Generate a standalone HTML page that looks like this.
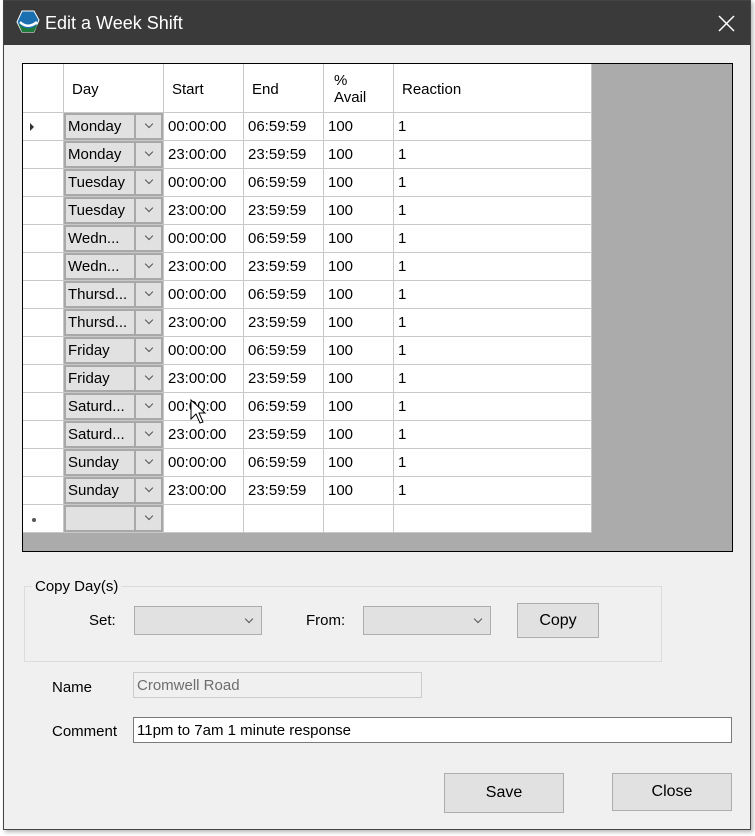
<!DOCTYPE html>
<html><head><style>
*{box-sizing:border-box;margin:0;padding:0}
body{width:755px;height:836px;background:#fff;font-family:"Liberation Sans",sans-serif;font-size:15px;color:#000;position:relative;overflow:hidden}
.win{position:absolute;left:3px;top:0;width:748px;height:830px;background:#f0f0f0;border:1px solid #444;box-shadow:2px 2px 4px rgba(0,0,0,.3)}
.title{position:absolute;left:0;top:0;width:746px;height:44px;background:#3a3a3a;color:#fff;font-size:18px}
.abs{position:absolute}
.grid{position:absolute;left:18px;top:62px;width:711px;height:489px;border:1px solid #000;background:#ababab}
.tb{position:absolute;left:0;top:0;width:569px;background:#fff}
.r{display:flex;height:28px}
.r>div{height:28px;border-right:1px solid #c8c8c8;border-bottom:1px solid #c8c8c8;line-height:27px;padding-left:4px;white-space:nowrap;position:relative;flex:none}
.r.h,.r.h>div{height:49px}
.r.h>div{line-height:52px;padding-left:8px}
.c0{width:41px;padding:0!important}.c1{width:100px;padding:0!important}.c2{width:80px}.c3{width:80px}.c4{width:70px}.c5{width:198px}
.cb{position:absolute;left:0;top:0;width:99px;height:27px;border:2px solid #a8a8a8;background:#e1e1e1;padding-left:2px;line-height:23px}
.cb:after{content:"";position:absolute;right:0;top:0;width:25px;height:23px;border-left:2px solid #a8a8a8}
.ar{position:absolute;right:9px;top:6px;width:6px;height:6px;border-right:1px solid #555;border-bottom:1px solid #555;transform:rotate(45deg)}
.btn{position:absolute;background:#e1e1e1;border:1px solid #adadad;text-align:center;font-size:16px}
.dd{position:absolute;background:#e1e1e1;border:1px solid #adadad;height:29px}
</style></head><body>
<div class="win">
<div class="title">
<svg class="abs" style="left:12px;top:9px" width="24" height="24" viewBox="0 0 24 24"><polygon points="6,1 18,1 23,10 18,22 6,22 1,12" fill="#1a6fb0" stroke="#fff" stroke-width="1"/><path d="M2,13 C8,20 16,20 22,14 L18,22 L6,22 Z" fill="#1e7b3c"/><path d="M4,12 C9,17 15,17 21,12" stroke="#fff" stroke-width="2.5" fill="none"/></svg>
<div class="abs" style="left:41px;top:12px">Edit a Week Shift</div>
<svg class="abs" style="left:714px;top:14px" width="17" height="17"><path d="M1,1L16,16M16,1L1,16" stroke="#fff" stroke-width="1.5"/></svg>
</div>
<div class="grid">
<div class="tb">
<div class="r h"><div class="c0"></div><div class="c1" style="padding-left:8px!important">Day</div><div class="c2">Start</div><div class="c3">End</div><div class="c4" style="line-height:17px;padding-top:8px;padding-left:10px">%<br>Avail</div><div class="c5">Reaction</div></div>
<div class="r"><div class="c0"><svg width="41" height="28"><path d="M7,10L11,14L7,18Z" fill="#333"/></svg></div><div class="c1"><div class="cb">Monday<span class="ar"></span></div></div><div class="c2">00:00:00</div><div class="c3">06:59:59</div><div class="c4">100</div><div class="c5">1</div></div>
<div class="r"><div class="c0"></div><div class="c1"><div class="cb">Monday<span class="ar"></span></div></div><div class="c2">23:00:00</div><div class="c3">23:59:59</div><div class="c4">100</div><div class="c5">1</div></div>
<div class="r"><div class="c0"></div><div class="c1"><div class="cb">Tuesday<span class="ar"></span></div></div><div class="c2">00:00:00</div><div class="c3">06:59:59</div><div class="c4">100</div><div class="c5">1</div></div>
<div class="r"><div class="c0"></div><div class="c1"><div class="cb">Tuesday<span class="ar"></span></div></div><div class="c2">23:00:00</div><div class="c3">23:59:59</div><div class="c4">100</div><div class="c5">1</div></div>
<div class="r"><div class="c0"></div><div class="c1"><div class="cb">Wedn...<span class="ar"></span></div></div><div class="c2">00:00:00</div><div class="c3">06:59:59</div><div class="c4">100</div><div class="c5">1</div></div>
<div class="r"><div class="c0"></div><div class="c1"><div class="cb">Wedn...<span class="ar"></span></div></div><div class="c2">23:00:00</div><div class="c3">23:59:59</div><div class="c4">100</div><div class="c5">1</div></div>
<div class="r"><div class="c0"></div><div class="c1"><div class="cb">Thursd...<span class="ar"></span></div></div><div class="c2">00:00:00</div><div class="c3">06:59:59</div><div class="c4">100</div><div class="c5">1</div></div>
<div class="r"><div class="c0"></div><div class="c1"><div class="cb">Thursd...<span class="ar"></span></div></div><div class="c2">23:00:00</div><div class="c3">23:59:59</div><div class="c4">100</div><div class="c5">1</div></div>
<div class="r"><div class="c0"></div><div class="c1"><div class="cb">Friday<span class="ar"></span></div></div><div class="c2">00:00:00</div><div class="c3">06:59:59</div><div class="c4">100</div><div class="c5">1</div></div>
<div class="r"><div class="c0"></div><div class="c1"><div class="cb">Friday<span class="ar"></span></div></div><div class="c2">23:00:00</div><div class="c3">23:59:59</div><div class="c4">100</div><div class="c5">1</div></div>
<div class="r"><div class="c0"></div><div class="c1"><div class="cb">Saturd...<span class="ar"></span></div></div><div class="c2">00:00:00</div><div class="c3">06:59:59</div><div class="c4">100</div><div class="c5">1</div></div>
<div class="r"><div class="c0"></div><div class="c1"><div class="cb">Saturd...<span class="ar"></span></div></div><div class="c2">23:00:00</div><div class="c3">23:59:59</div><div class="c4">100</div><div class="c5">1</div></div>
<div class="r"><div class="c0"></div><div class="c1"><div class="cb">Sunday<span class="ar"></span></div></div><div class="c2">00:00:00</div><div class="c3">06:59:59</div><div class="c4">100</div><div class="c5">1</div></div>
<div class="r"><div class="c0"></div><div class="c1"><div class="cb">Sunday<span class="ar"></span></div></div><div class="c2">23:00:00</div><div class="c3">23:59:59</div><div class="c4">100</div><div class="c5">1</div></div>
<div class="r"><div class="c0"><svg width="41" height="28"><circle cx="11" cy="15" r="2" fill="#555"/></svg></div><div class="c1"><div class="cb"><span class="ar"></span></div></div><div class="c2"></div><div class="c3"></div><div class="c4"></div><div class="c5"></div></div>
</div>
<svg class="abs" style="left:167px;top:335px" width="20" height="30"><path d="M1,1L1,20L6,15L10,24L13,23L9,14L15,14Z" fill="#fff" stroke="#000"/></svg>
</div>
<div class="abs" style="left:20px;top:585px;width:638px;height:76px;border:1px solid #dcdcdc"></div>
<div class="abs" style="left:28px;top:577px;background:#f0f0f0;padding:0 3px">Copy Day(s)</div>
<div class="abs" style="left:85px;top:611px">Set:</div>
<div class="dd" style="left:130px;top:605px;width:128px"><span class="ar" style="top:9px"></span></div>
<div class="abs" style="left:302px;top:611px">From:</div>
<div class="dd" style="left:359px;top:605px;width:128px"><span class="ar" style="top:9px"></span></div>
<div class="btn" style="left:513px;top:602px;width:82px;height:35px;line-height:33px">Copy</div>
<div class="abs" style="left:48px;top:678px">Name</div>
<div class="abs" style="left:129px;top:671px;width:289px;height:26px;border:1px solid #ccc;color:#6d6d6d;padding:4px 0 0 3px">Cromwell Road</div>
<div class="abs" style="left:48px;top:722px">Comment</div>
<div class="abs" style="left:129px;top:716px;width:599px;height:26px;border:1px solid #7a7a7a;background:#fff;padding:4px 0 0 3px">11pm to 7am 1 minute response</div>
<div class="btn" style="left:440px;top:772px;width:120px;height:40px;line-height:38px">Save</div>
<div class="btn" style="left:608px;top:772px;width:120px;height:38px;line-height:36px">Close</div>
</div>
</body></html>
